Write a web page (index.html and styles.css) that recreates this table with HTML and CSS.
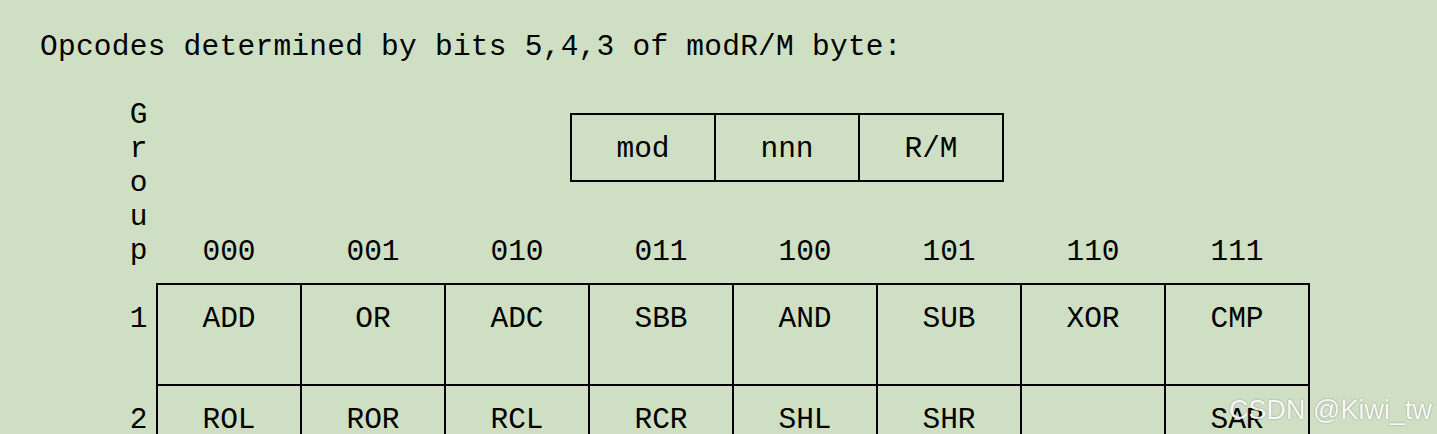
FILE: index.html
```html
<!DOCTYPE html>
<html lang="en">
<head>
<meta charset="utf-8">
<title>Opcodes determined by bits 5,4,3 of modR/M byte</title>
<link rel="stylesheet" href="styles.css">
</head>
<body>
<main class="page">
  <p class="title">Opcodes determined by bits 5,4,3 of modR/M byte:</p>
  <div class="diagram">
    <div class="group-label"><span>G</span><span>r</span><span>o</span><span>u</span><span>p</span></div>
    <div class="fields-row">
      <div class="fields">
        <div class="field">mod</div>
        <div class="field">nnn</div>
        <div class="field">R/M</div>
      </div>
    </div>
    <div class="bit-header">
      <span>000</span><span>001</span><span>010</span><span>011</span><span>100</span><span>101</span><span>110</span><span>111</span>
    </div>
    <div class="row-labels">
      <div class="row-label">1</div>
      <div class="row-label">2</div>
    </div>
    <div class="ops">
      <div class="op">ADD</div><div class="op">OR</div><div class="op">ADC</div><div class="op">SBB</div><div class="op">AND</div><div class="op">SUB</div><div class="op">XOR</div><div class="op">CMP</div>
      <div class="op">ROL</div><div class="op">ROR</div><div class="op">RCL</div><div class="op">RCR</div><div class="op">SHL</div><div class="op">SHR</div><div class="op"></div><div class="op">SAR</div>
    </div>
  </div>
</main>
<div class="watermark">CSDN @Kiwi_tw</div>
</body>
</html>
```

FILE: styles.css
```css
html, body {
  overflow: hidden;
}
body {
  margin: 0;
  background: #cedfc3;
  color: #000;
  font-family: "Liberation Mono", "Courier New", monospace;
  font-size: 29.5px;
  line-height: 34px;
}
.page {
  padding-top: 30px;
}
.title {
  margin: 0 0 34px;
  padding-left: 40px;
  letter-spacing: 0.25px;
  white-space: pre;
}
.diagram {
  display: grid;
  grid-template-columns: 35px auto;
  margin-left: 121px;
}
.group-label {
  grid-column: 1;
  grid-row: 1 / 3;
  display: flex;
  flex-direction: column;
  align-items: center;
}
.fields-row {
  grid-column: 2;
  grid-row: 1;
  height: 136px;
  box-sizing: border-box;
  padding-top: 15px;
  padding-left: 414px;
}
.fields {
  display: flex;
  width: max-content;
  border: 2px solid #000;
}
.field {
  width: 142px;
  height: 62px;
  padding-top: 3px;
  display: flex;
  align-items: center;
  justify-content: center;
}
.field + .field {
  border-left: 2px solid #000;
}
.bit-header {
  grid-column: 2;
  grid-row: 2;
  display: grid;
  grid-template-columns: repeat(8, 142px);
  column-gap: 2px;
  padding-left: 2px;
  padding-top: 1px;
  text-align: center;
}
.row-labels {
  grid-column: 1;
  grid-row: 3;
  margin-top: 14px;
  padding-top: 2px;
}
.row-label {
  height: 101px;
  box-sizing: border-box;
  padding-top: 17px;
  text-align: center;
}
.ops {
  grid-column: 2;
  grid-row: 3;
  margin-top: 14px;
  display: grid;
  grid-template-columns: repeat(8, 144px);
  grid-auto-rows: 101px;
  width: max-content;
  border-left: 2px solid #000;
  border-top: 2px solid #000;
}
.op {
  box-sizing: border-box;
  border-right: 2px solid #000;
  border-bottom: 2px solid #000;
  padding-top: 17px;
  text-align: center;
}
.watermark {
  position: fixed;
  top: 397px;
  right: 5px;
  font-family: "Liberation Sans", Arial, sans-serif;
  font-size: 27px;
  line-height: 27px;
  color: rgba(255, 255, 255, 0.92);
  text-shadow: 0 0 2px rgba(0, 0, 0, 0.35);
  white-space: nowrap;
}
```
